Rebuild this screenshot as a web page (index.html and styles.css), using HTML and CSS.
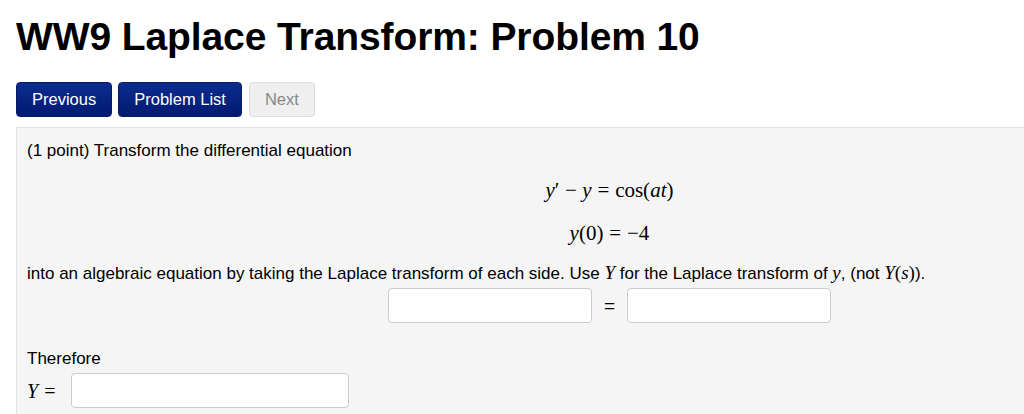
FILE: index.html
```html
<!DOCTYPE html>
<html>
<head>
<meta charset="utf-8">
<link rel="stylesheet" href="styles.css">
</head>
<body>
<h1 class="title">WW9 Laplace Transform: Problem 10</h1>
<div class="nav">
  <button class="btn btn-primary">Previous</button>
  <button class="btn btn-primary">Problem List</button>
  <button class="btn btn-disabled">Next</button>
</div>
<div class="panel">
  <p class="intro">(1 point) Transform the differential equation</p>
  <div class="eq eq1"><span class="mi">y</span>&#8242;<span class="op">&minus;</span><span class="mi">y</span><span class="rel">=</span>cos(<span class="mi">at</span>)</div>
  <div class="eq eq2"><span class="mi">y</span>(0)<span class="rel">=</span>&minus;4</div>
  <p class="desc">into an algebraic equation by taking the Laplace transform of each side. Use <span class="mi m">Y</span> for the Laplace transform of <span class="mi m">y</span>, (not <span class="mi m">Y</span><span class="m">(</span><span class="mi m">s</span><span class="m">)</span>).</p>
  <div class="eqrow">
    <input class="field field-mid" type="text">
    <span class="eqsign">=</span>
    <input class="field field-mid" type="text">
  </div>
  <p class="therefore">Therefore</p>
  <div class="yrow">
    <span class="ylabel"><span class="mi">Y</span><span class="rel">=</span></span>
    <input class="field field-y" type="text">
  </div>
</div>
</body>
</html>
```
FILE: styles.css
```css
html, body {
  margin: 0;
  padding: 0;
  background: #ffffff;
  overflow: hidden;
}
body {
  font-family: "Liberation Sans", Arial, sans-serif;
  color: #000;
  padding: 0 0 0 16px;
  width: 1200px;
}
.title {
  font-size: 39px;
  font-weight: bold;
  margin: 0;
  padding-top: 15px;
  line-height: 44px;
  letter-spacing: -0.1px;
}
.nav {
  display: flex;
  gap: 6px;
  margin-top: 23px;
}
.btn {
  font-family: "Liberation Sans", Arial, sans-serif;
  font-size: 16.5px;
  height: 35px;
  border-radius: 4px;
  padding: 0 15px;
  cursor: pointer;
}
.btn-primary {
  color: #fff;
  background: linear-gradient(#0b2c8e, #021a72);
  border: 1px solid #0a1c60;
}
.btn-disabled {
  color: #888;
  background: #efefef;
  border: 1px solid #ddd;
  margin-left: 1px;
}
.panel {
  margin-top: 10px;
  background: #f5f5f5;
  border: 1px solid #e3e3e3;
  border-right: none;
  padding: 13px 11px 12px 10px;
  width: 1165px;
  font-size: 17px;
  line-height: 20px;
}
.intro {
  margin: 0;
}
.eq {
  font-family: "Liberation Serif", "Times New Roman", serif;
  font-size: 21px;
  text-align: center;
  line-height: 24px;
}
.eq1 { margin-top: 17px; }
.eq2 { margin-top: 19px; }
.op { margin: 0 0.26em; }
.rel { margin: 0 0.28em; }
.mi { font-style: italic; }
.m { font-family: "Liberation Serif", "Times New Roman", serif; font-size: 19px; }
.desc {
  margin: 18px 0 0;
}
.eqrow {
  display: flex;
  justify-content: center;
  align-items: center;
  margin-top: 4px;
}
.field {
  box-sizing: border-box;
  height: 35px;
  border: 1px solid #cccccc;
  border-radius: 4px;
  background: #fff;
  margin: 0;
}
.field-mid { width: 204px; }
.eqsign {
  font-size: 19px;
  width: 35px;
  text-align: center;
}
.therefore {
  margin: 26px 0 0;
}
.yrow {
  display: flex;
  align-items: center;
  margin-top: 4px;
}
.ylabel {
  font-family: "Liberation Serif", "Times New Roman", serif;
  font-size: 20px;
  width: 44px;
}
.ylabel .rel { margin: 0 0 0 0.3em; }
.field-y { width: 278px; }
```
